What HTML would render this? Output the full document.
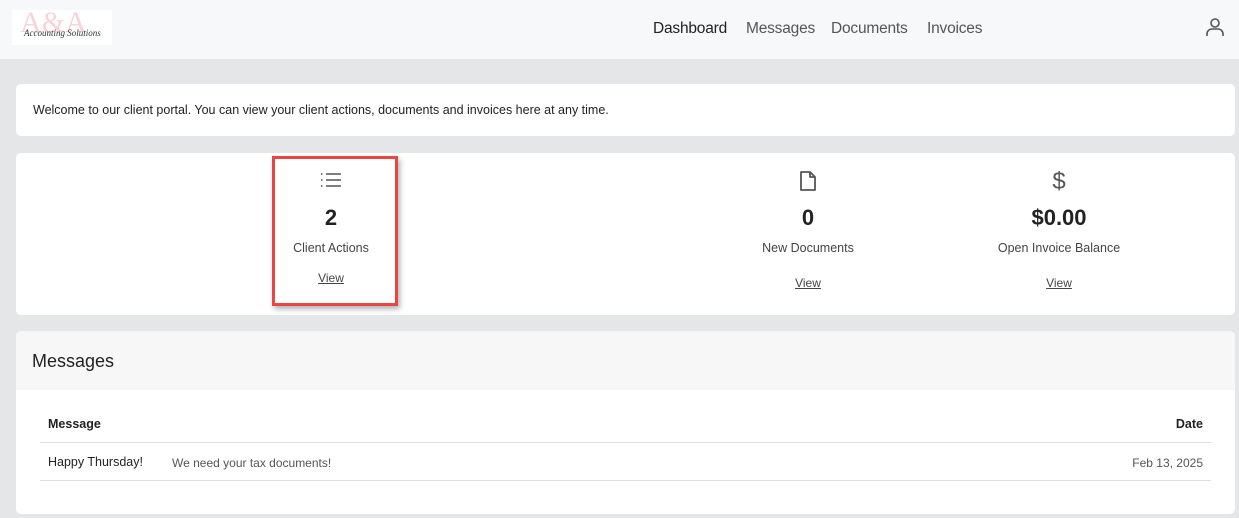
<!DOCTYPE html>
<html><head><style>
*{box-sizing:border-box;margin:0;padding:0}
body{width:1239px;height:518px;background:#e5e6e8;font-family:"Liberation Sans",sans-serif;color:#222;position:relative;overflow:hidden}
.hdr{position:absolute;left:0;top:0;width:1239px;height:59px;background:#f7f8fa}
.logo{position:absolute;left:12px;top:10px;width:100px;height:35px;background:#fff}
.nav{position:absolute;top:20px;font-size:15.5px;color:#555;letter-spacing:-0.2px}
.card{position:absolute;left:16px;width:1219px;background:#fff;border-radius:5px}
.t{position:absolute;text-align:center;transform:translateX(-50%);white-space:nowrap}
.v{font-size:12px;color:#444;text-decoration:underline}
</style></head><body>
<div class="hdr">
<div class="logo"><div style="position:absolute;left:8px;top:-4px;font-family:'Liberation Serif',serif;font-size:30px;color:#f8d3dc">A&amp;A</div><div style="position:absolute;left:12px;top:18px;font-family:'Liberation Serif',serif;font-style:italic;font-size:9px;color:#333">Accounting Solutions</div></div>
<div class="nav" style="left:653px;color:#222">Dashboard</div>
<div class="nav" style="left:746px">Messages</div>
<div class="nav" style="left:831px">Documents</div>
<div class="nav" style="left:927px">Invoices</div>
<svg style="position:absolute;left:1205px;top:17px" width="20" height="20" viewBox="0 0 20 20" fill="none" stroke="#555" stroke-width="1.6"><circle cx="10" cy="6" r="4"/><path d="M2 19v-2a5 5 0 0 1 5-5h6a5 5 0 0 1 5 5v2"/></svg>
</div>
<div class="card" style="top:84px;height:52px"><div style="position:absolute;left:17px;top:19px;font-size:12.5px">Welcome to our client portal. You can view your client actions, documents and invoices here at any time.</div></div>
<div class="card" style="top:153px;height:162px">
<svg style="position:absolute;left:304px;top:19px" width="22" height="16" viewBox="0 0 22 16" stroke="#555" stroke-width="1.6"><path d="M1 2h1.5M1 8h1.5M1 14h1.5M6 2h15M6 8h15M6 14h15"/></svg>
<div class="t" style="left:315px;top:52px;font-size:22px;font-weight:bold">2</div>
<div class="t" style="left:315px;top:88px;font-size:12.5px;color:#444">Client Actions</div>
<div class="t v" style="left:315px;top:118px">View</div>
<svg style="position:absolute;left:781px;top:17px" width="22" height="22" viewBox="0 0 20 22" fill="none" stroke="#555" stroke-width="1.8" stroke-linejoin="round"><path d="M3 2h9l5 5v13H3z M12 2v5h5"/></svg>
<div class="t" style="left:792px;top:52px;font-size:22px;font-weight:bold">0</div>
<div class="t" style="left:792px;top:88px;font-size:12.5px;color:#444">New Documents</div>
<div class="t v" style="left:792px;top:123px">View</div>
<div class="t" style="left:1043px;top:15px;font-size:24px;color:#555">$</div>
<div class="t" style="left:1043px;top:52px;font-size:22px;font-weight:bold">$0.00</div>
<div class="t" style="left:1043px;top:88px;font-size:12.5px;color:#444">Open Invoice Balance</div>
<div class="t v" style="left:1043px;top:123px">View</div>
</div>
<div style="position:absolute;left:272px;top:156px;width:126px;height:150px;border:3px solid #e84545;box-shadow:2px 3px 5px rgba(0,0,0,.3)"></div>
<div class="card" style="top:331px;height:183px;overflow:hidden">
<div style="height:59px;background:#f7f7f7;padding:20px 16px;font-size:18px">Messages</div>
<div style="position:absolute;left:32px;top:86px;font-size:12.5px;font-weight:bold">Message</div>
<div style="position:absolute;right:32px;top:86px;font-size:12.5px;font-weight:bold">Date</div>
<div style="position:absolute;left:24px;right:24px;top:111px;border-top:1px solid #ddd"></div>
<div style="position:absolute;left:32px;top:124px;font-size:12.5px">Happy Thursday!</div>
<div style="position:absolute;left:156px;top:125px;font-size:12px;color:#555">We need your tax documents!</div>
<div style="position:absolute;right:32px;top:125px;font-size:12px;color:#555">Feb 13, 2025</div>
<div style="position:absolute;left:24px;right:24px;top:149px;border-top:1px solid #ddd"></div>
</div>
</body></html>
